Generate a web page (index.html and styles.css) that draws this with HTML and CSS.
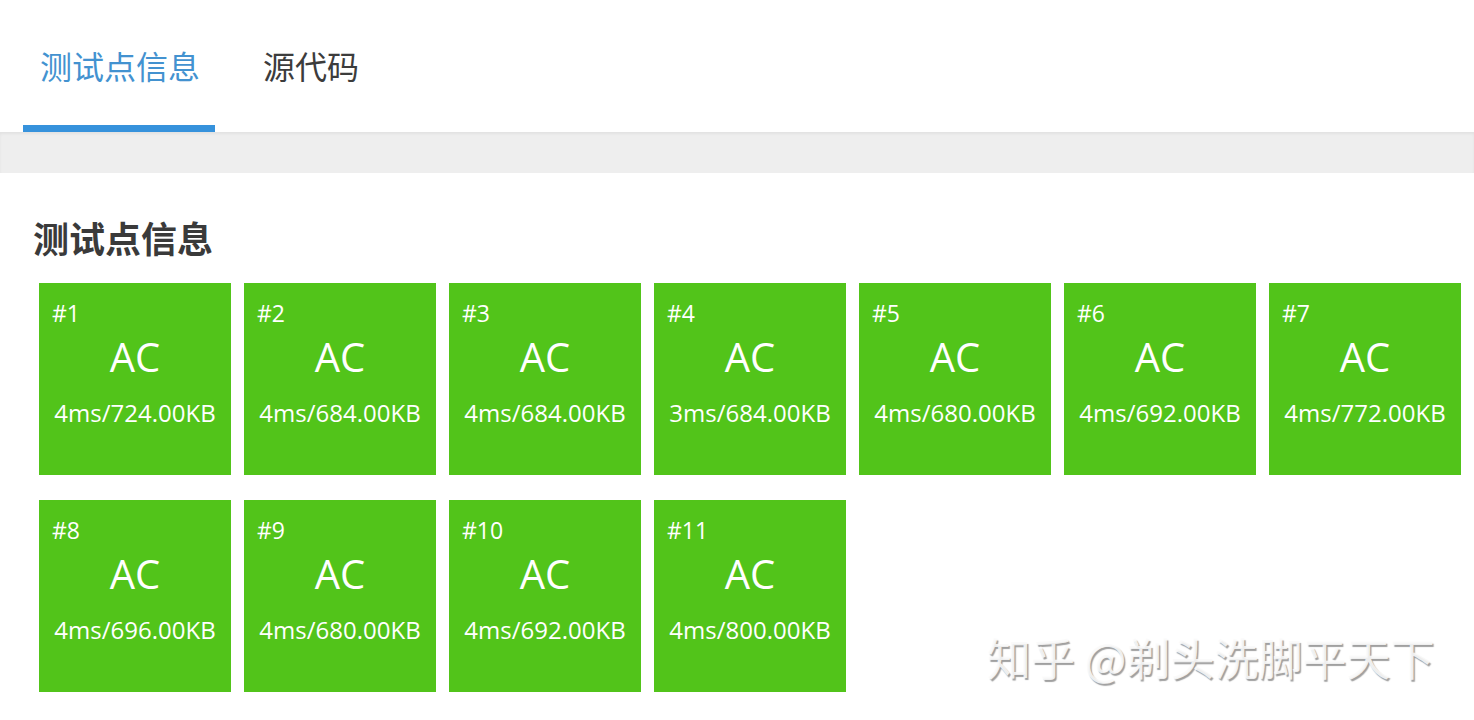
FILE: index.html
```html
<!DOCTYPE html>
<html lang="zh-CN">
<head>
    <meta charset="UTF-8">
    <meta name="viewport" content="width=device-width, initial-scale=1.0">
    <title>测试点信息</title>
    <link rel="stylesheet" href="styles.css">
</head>
<body>
    <div id="tab-bar">
        <div class="tab active">测试点信息</div>
        <div class="tab">源代码</div>
    </div>
    <div id="tab-gap"></div>

    <div id="cases-section">
        <h2 id="cases-title">测试点信息</h2>
        <div id="case-list">
            <div class="case-card">
                <div class="case-id">#1</div>
                <div class="case-status">AC</div>
                <div class="case-usage">4ms/724.00KB</div>
            </div>
            <div class="case-card">
                <div class="case-id">#2</div>
                <div class="case-status">AC</div>
                <div class="case-usage">4ms/684.00KB</div>
            </div>
            <div class="case-card">
                <div class="case-id">#3</div>
                <div class="case-status">AC</div>
                <div class="case-usage">4ms/684.00KB</div>
            </div>
            <div class="case-card">
                <div class="case-id">#4</div>
                <div class="case-status">AC</div>
                <div class="case-usage">3ms/684.00KB</div>
            </div>
            <div class="case-card">
                <div class="case-id">#5</div>
                <div class="case-status">AC</div>
                <div class="case-usage">4ms/680.00KB</div>
            </div>
            <div class="case-card">
                <div class="case-id">#6</div>
                <div class="case-status">AC</div>
                <div class="case-usage">4ms/692.00KB</div>
            </div>
            <div class="case-card">
                <div class="case-id">#7</div>
                <div class="case-status">AC</div>
                <div class="case-usage">4ms/772.00KB</div>
            </div>
            <div class="case-card">
                <div class="case-id">#8</div>
                <div class="case-status">AC</div>
                <div class="case-usage">4ms/696.00KB</div>
            </div>
            <div class="case-card">
                <div class="case-id">#9</div>
                <div class="case-status">AC</div>
                <div class="case-usage">4ms/680.00KB</div>
            </div>
            <div class="case-card">
                <div class="case-id">#10</div>
                <div class="case-status">AC</div>
                <div class="case-usage">4ms/692.00KB</div>
            </div>
            <div class="case-card">
                <div class="case-id">#11</div>
                <div class="case-status">AC</div>
                <div class="case-usage">4ms/800.00KB</div>
            </div>
        </div>
    </div>

    <div id="watermark">知乎 @剃头洗脚平天下</div>
</body>
</html>
```

FILE: styles.css
```css
body {
    font-family: "Open Sans", "Noto Sans CJK SC", sans-serif;
    margin: 0;
    padding: 0;
    background-color: #fff;
    color: #333;
    height: 720px;
    overflow: hidden;
    position: relative;
}

#tab-bar {
    display: flex;
    padding-left: 23px;
    background-color: #fff;
}

.tab {
    font-family: "Noto Sans CJK SC", sans-serif;
    font-size: 32px;
    line-height: 46px;
    color: #3c3c3c;
    padding: 42px 15px 37px 17px;
    white-space: nowrap;
    border-bottom: 7px solid transparent;
}

.tab + .tab {
    padding-left: 48px;
}

.tab.active {
    color: #4392d0;
    border-bottom-color: #3692dc;
}

#tab-gap {
    height: 41px;
    background-color: #eee;
    box-shadow: inset 0 2px 3px rgba(0, 0, 0, 0.05);
}

#cases-section {
    padding: 39px 0 0 33px;
}

#cases-title {
    font-family: "Noto Sans CJK SC", sans-serif;
    font-size: 36px;
    line-height: 50px;
    font-weight: bold;
    color: #3a3a3a;
    margin: 0 0 21px 0;
}

#case-list {
    display: flex;
    flex-wrap: wrap;
    column-gap: 13px;
    row-gap: 25px;
    padding-left: 6px;
}

.case-card {
    width: 192px;
    height: 192px;
    box-sizing: border-box;
    background-color: #52c41a;
    color: #fff;
    padding: 16px 13px 0 13px;
    display: flex;
    flex-direction: column;
}

.case-id {
    font-size: 23px;
    line-height: 28px;
}

.case-status {
    font-size: 40px;
    line-height: 46px;
    margin-top: 7px;
    text-align: center;
}

.case-usage {
    font-size: 24px;
    line-height: 30px;
    margin: 18px -10px 0 -10px;
    text-align: center;
    white-space: nowrap;
}

#watermark {
    position: absolute;
    left: 987px;
    top: 629px;
    font-family: "Noto Sans CJK SC", sans-serif;
    font-size: 44px;
    line-height: 56px;
    color: rgba(250, 250, 250, 0.9);
    text-shadow: 1.5px 1.5px 1px #a0a0a0;
    white-space: nowrap;
}
```
